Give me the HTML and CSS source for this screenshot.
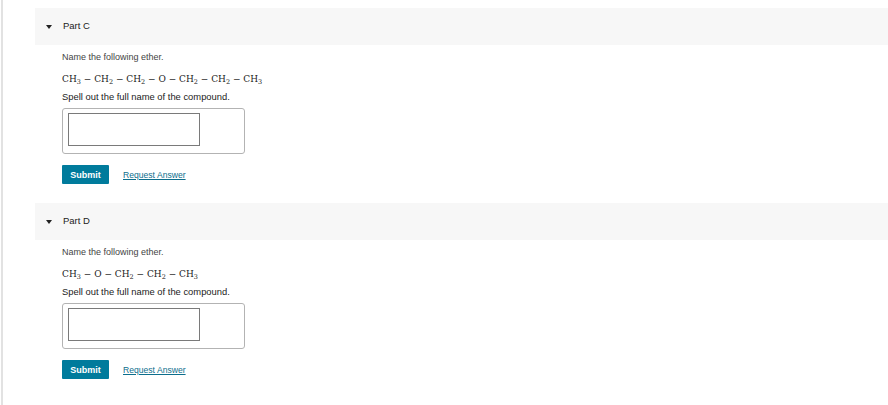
FILE: index.html
```html
<!DOCTYPE html>
<html>
<head>
<meta charset="utf-8">
<link rel="stylesheet" href="styles.css">
</head>
<body>
<div class="page">
  <section class="part">
    <div class="part-head"><span class="caret"></span><span class="part-title">Part C</span></div>
    <div class="part-body">
      <p class="q">Name the following ether.</p>
      <p class="formula">CH<sub>3</sub> − CH<sub>2</sub> − CH<sub>2</sub> − O − CH<sub>2</sub> − CH<sub>2</sub> − CH<sub>3</sub></p>
      <p class="instr">Spell out the full name of the compound.</p>
      <div class="answer-box"><div class="input"></div></div>
      <div class="actions"><button class="submit">Submit</button><a class="req" href="#">Request Answer</a></div>
    </div>
  </section>
  <section class="part">
    <div class="part-head"><span class="caret"></span><span class="part-title">Part D</span></div>
    <div class="part-body">
      <p class="q">Name the following ether.</p>
      <p class="formula">CH<sub>3</sub> − O − CH<sub>2</sub> − CH<sub>2</sub> − CH<sub>3</sub></p>
      <p class="instr">Spell out the full name of the compound.</p>
      <div class="answer-box"><div class="input"></div></div>
      <div class="actions"><button class="submit">Submit</button><a class="req" href="#">Request Answer</a></div>
    </div>
  </section>
</div>
</body>
</html>
```
FILE: styles.css
```css
html, body { margin: 0; padding: 0; background: #fff; }
body { font-family: "Liberation Sans", Arial, sans-serif; color: #222; }
.page {
  border-left: 2px solid #e2e2e2;
  margin-left: 1px;
  height: 405px;
  box-sizing: border-box;
  padding-top: 8px;
  padding-left: 32px;
}
.part { margin-bottom: 19px; }
.part-head {
  height: 37px;
  background: #f7f7f7;
  display: flex;
  align-items: center;
  padding-left: 11px;
}
.caret {
  width: 0; height: 0;
  border-left: 3.5px solid transparent;
  border-right: 3.5px solid transparent;
  border-top: 4px solid #222;
  margin-right: 11px;
  margin-top: 0px;
}
.part-title { font-size: 9.5px; color: #222; margin-top: -2px; }
.part-body { padding-left: 27px; padding-top: 6px; }
.q { margin: 0; font-size: 9px; line-height: 12px; color: #444; }
.formula {
  margin: 10px 0 0 0;
  font-family: "DejaVu Serif", "Liberation Serif", serif;
  font-size: 9px;
  line-height: 12px;
  color: #222;
}
.formula sub { font-size: 6.5px; vertical-align: -2px; }
.instr { margin: 3px 0 0 0; font-size: 9.4px; line-height: 12px; color: #222; }
.answer-box {
  margin-top: 5px;
  width: 183px;
  height: 46px;
  box-sizing: border-box;
  border: 1px solid #b3b3b3;
  border-radius: 3px;
  padding: 4px 5px;
}
.input {
  width: 132px;
  height: 33px;
  box-sizing: border-box;
  border: 1px solid #7a7a7a;
}
.actions { margin-top: 11px; display: flex; align-items: center; }
.submit {
  width: 47px;
  height: 19px;
  background: #007b9c;
  color: #fff;
  border: none;
  border-radius: 1px;
  font-family: "Liberation Sans", Arial, sans-serif;
  font-size: 9px;
  font-weight: bold;
  padding: 0;
  margin-right: 14px;
}
.req {
  color: #0d6e8c;
  font-size: 8.6px;
  text-decoration: underline;
}
```
